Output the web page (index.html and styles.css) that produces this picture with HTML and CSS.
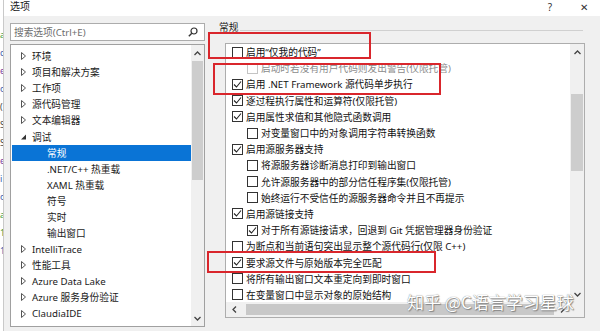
FILE: index.html
```html
<!DOCTYPE html>
<html lang="zh-CN">
<head>
  <meta charset="UTF-8" />
  <title>选项</title>
  <link rel="stylesheet" href="styles.css">
</head>
<body>
  <div class="desk">
    <div class="strip">
      <span class="g">a</span><span class="b">c</span><span class="p">e</span><span class="b">o</span><span>(</span><span>S</span><span>S</span><span class="p">e</span><span class="b">i</span><span class="b">o</span><span class="g">a</span><span class="g">1</span><span class="b">1</span>
    </div>

    <div class="dialog">
      <div class="titlebar">
        <span class="title">选项</span>
        <span class="tb-btn">?</span>
        <span class="tb-btn close">✕</span>
      </div>

      <div class="dialog-body">
        <div class="left">
          <div class="search">
            <span class="search-text">搜索选项(Ctrl+E)</span>
            <svg class="search-icon" width="10" height="10" viewBox="0 0 10 10">
              <circle cx="6" cy="4" r="3" fill="none" stroke="#333" stroke-width="1.2"/>
              <line x1="3.8" y1="6.2" x2="0.8" y2="9.2" stroke="#333" stroke-width="1.4"/>
            </svg>
          </div>

          <div class="tree">
            <div class="tree-list">
              <div class="node"><svg class="arr" width="5" height="8" viewBox="0 0 5 8"><polygon points="0.5,0.5 4.5,4 0.5,7.5" fill="none" stroke="#555"/></svg>环境</div>
              <div class="node"><svg class="arr" width="5" height="8" viewBox="0 0 5 8"><polygon points="0.5,0.5 4.5,4 0.5,7.5" fill="none" stroke="#555"/></svg>项目和解决方案</div>
              <div class="node"><svg class="arr" width="5" height="8" viewBox="0 0 5 8"><polygon points="0.5,0.5 4.5,4 0.5,7.5" fill="none" stroke="#555"/></svg>工作项</div>
              <div class="node"><svg class="arr" width="5" height="8" viewBox="0 0 5 8"><polygon points="0.5,0.5 4.5,4 0.5,7.5" fill="none" stroke="#555"/></svg>源代码管理</div>
              <div class="node"><svg class="arr" width="5" height="8" viewBox="0 0 5 8"><polygon points="0.5,0.5 4.5,4 0.5,7.5" fill="none" stroke="#555"/></svg>文本编辑器</div>
              <div class="node"><svg class="arr" width="5" height="8" viewBox="0 0 5 8"><polygon points="5,1.5 5,6.5 0,6.5" fill="#333"/></svg>调试</div>
              <div class="node sub selected">常规</div>
              <div class="node sub">.NET/C++ 热重载</div>
              <div class="node sub">XAML 热重载</div>
              <div class="node sub">符号</div>
              <div class="node sub">实时</div>
              <div class="node sub">输出窗口</div>
              <div class="node"><svg class="arr" width="5" height="8" viewBox="0 0 5 8"><polygon points="0.5,0.5 4.5,4 0.5,7.5" fill="none" stroke="#555"/></svg>IntelliTrace</div>
              <div class="node"><svg class="arr" width="5" height="8" viewBox="0 0 5 8"><polygon points="0.5,0.5 4.5,4 0.5,7.5" fill="none" stroke="#555"/></svg>性能工具</div>
              <div class="node"><svg class="arr" width="5" height="8" viewBox="0 0 5 8"><polygon points="0.5,0.5 4.5,4 0.5,7.5" fill="none" stroke="#555"/></svg>Azure Data Lake</div>
              <div class="node"><svg class="arr" width="5" height="8" viewBox="0 0 5 8"><polygon points="0.5,0.5 4.5,4 0.5,7.5" fill="none" stroke="#555"/></svg>Azure 服务身份验证</div>
              <div class="node"><svg class="arr" width="5" height="8" viewBox="0 0 5 8"><polygon points="0.5,0.5 4.5,4 0.5,7.5" fill="none" stroke="#555"/></svg>ClaudiaIDE</div>
            </div>
            <div class="vscroll tree-scroll">
              <div class="sb-arrow"><svg width="7" height="5" viewBox="0 0 7 5"><polyline points="0.5,4 3.5,1 6.5,4" fill="none" stroke="#444" stroke-width="1.3"/></svg></div>
              <div class="thumb tree-thumb"></div>
              <div class="track"></div>
              <div class="sb-arrow"><svg width="7" height="5" viewBox="0 0 7 5"><polyline points="0.5,1 3.5,4 6.5,1" fill="none" stroke="#444" stroke-width="1.3"/></svg></div>
            </div>
          </div>
        </div>

        <div class="right">
          <div class="group-head">
            <span class="group-title">常规</span>
            <span class="group-line"></span>
          </div>

          <div class="panel">
            <div class="panel-main">
              <div class="rows">
                <div class="row"><span class="cb"></span>启用“仅我的代码”</div>
                <div class="row sub disabled"><span class="cb"></span>启动时若没有用户代码则发出警告(仅限托管)</div>
                <div class="row"><span class="cb"><svg width="9" height="9" viewBox="0 0 9 9"><polyline points="1,4.5 3.5,7 8,1.5" fill="none" stroke="#222" stroke-width="1.1"/></svg></span>启用 .NET Framework 源代码单步执行</div>
                <div class="row"><span class="cb"><svg width="9" height="9" viewBox="0 0 9 9"><polyline points="1,4.5 3.5,7 8,1.5" fill="none" stroke="#222" stroke-width="1.1"/></svg></span>逐过程执行属性和运算符(仅限托管)</div>
                <div class="row"><span class="cb"><svg width="9" height="9" viewBox="0 0 9 9"><polyline points="1,4.5 3.5,7 8,1.5" fill="none" stroke="#222" stroke-width="1.1"/></svg></span>启用属性求值和其他隐式函数调用</div>
                <div class="row sub"><span class="cb"></span>对变量窗口中的对象调用字符串转换函数</div>
                <div class="row"><span class="cb"><svg width="9" height="9" viewBox="0 0 9 9"><polyline points="1,4.5 3.5,7 8,1.5" fill="none" stroke="#222" stroke-width="1.1"/></svg></span>启用源服务器支持</div>
                <div class="row sub"><span class="cb"></span>将源服务器诊断消息打印到输出窗口</div>
                <div class="row sub"><span class="cb"></span>允许源服务器中的部分信任程序集(仅限托管)</div>
                <div class="row sub"><span class="cb"></span>始终运行不受信任的源服务器命令并且不再提示</div>
                <div class="row"><span class="cb"><svg width="9" height="9" viewBox="0 0 9 9"><polyline points="1,4.5 3.5,7 8,1.5" fill="none" stroke="#222" stroke-width="1.1"/></svg></span>启用源链接支持</div>
                <div class="row sub"><span class="cb"><svg width="9" height="9" viewBox="0 0 9 9"><polyline points="1,4.5 3.5,7 8,1.5" fill="none" stroke="#222" stroke-width="1.1"/></svg></span>对于所有源链接请求，回退到 Git 凭据管理器身份验证</div>
                <div class="row"><span class="cb"></span>为断点和当前语句突出显示整个源代码行(仅限 C++)</div>
                <div class="row"><span class="cb"><svg width="9" height="9" viewBox="0 0 9 9"><polyline points="1,4.5 3.5,7 8,1.5" fill="none" stroke="#222" stroke-width="1.1"/></svg></span>要求源文件与原始版本完全匹配</div>
                <div class="row"><span class="cb"></span>将所有输出窗口文本重定向到即时窗口</div>
                <div class="row"><span class="cb"></span>在变量窗口中显示对象的原始结构</div>
              </div>
              <div class="vscroll panel-scroll">
                <div class="sb-arrow"><svg width="7" height="5" viewBox="0 0 7 5"><polyline points="0.5,4 3.5,1 6.5,4" fill="none" stroke="#444" stroke-width="1.3"/></svg></div>
                <div class="track top-gap"></div>
                <div class="thumb panel-thumb"></div>
                <div class="track"></div>
                <div class="sb-arrow"><svg width="7" height="5" viewBox="0 0 7 5"><polyline points="0.5,1 3.5,4 6.5,1" fill="none" stroke="#444" stroke-width="1.3"/></svg></div>
              </div>
            </div>
            <div class="hscroll">
              <div class="sb-arrow-h"><svg width="5" height="7" viewBox="0 0 5 7"><polyline points="4,0.5 1,3.5 4,6.5" fill="none" stroke="#444" stroke-width="1.3"/></svg></div>
              <div class="hthumb"></div>
              <div class="sb-arrow-h"><svg width="5" height="7" viewBox="0 0 5 7"><polyline points="1,0.5 4,3.5 1,6.5" fill="none" stroke="#444" stroke-width="1.3"/></svg></div>
              <div class="corner"></div>
            </div>
          </div>
        </div>
      </div>
    </div>
  </div>

  <!-- annotation boxes drawn over the screenshot -->
  <div class="mark mark-1"></div>
  <div class="mark mark-2"></div>
  <div class="mark mark-3"></div>

  <div class="watermark">知乎 @C语言学习星球</div>
</body>
</html>
```

FILE: styles.css
```css
html, body {
  margin: 0;
  padding: 0;
}
body {
  width: 600px;
  height: 331px;
  overflow: hidden;
  position: relative;
  background: #f0f0f0;
  font-family: "Noto Sans", "Noto Sans CJK SC", sans-serif;
  font-size: 9.7px;
  color: #1a1a1a;
}

.desk { display: flex; height: 331px; }

.strip {
  width: 3px;
  border-right: 1px solid #c9c9c9;
  background: #fff;
  overflow: hidden;
  display: flex;
  flex-direction: column;
  gap: 9px;
  padding-top: 30px;
  font-size: 9px;
  line-height: 9px;
  color: #444;
}
.strip .g { color: #3a9a3a; }
.strip .b { color: #3a5fb0; }
.strip .p { color: #7a3aa0; }

.dialog { flex: 1; display: flex; flex-direction: column; }

.titlebar {
  height: 16px;
  background: #fff;
  display: flex;
  align-items: flex-start;
}
.title { padding-left: 6px; font-size: 10px; line-height: 12px; flex: 1; }
.tb-btn {
  font-size: 10px;
  line-height: 12px;
  padding-top: 1px;
  color: #333;
  width: 36px;
  text-align: center;
}
.tb-btn.close { width: 32px; }

.dialog-body { display: flex; flex: 1; }

/* left: search + tree */
.left { width: 195px; margin-left: 6px; padding-top: 7px; }

.search {
  height: 18px;
  box-sizing: border-box;
  border: 1px solid #acacac;
  background: #fff;
  display: flex;
  align-items: center;
  padding: 0 6px 0 3px;
}
.search-text { flex: 1; color: #6d6d6d; }
.search-icon { display: block; }

.tree {
  margin-top: 3px;
  height: 283px;
  box-sizing: border-box;
  border: 1px solid #a0a0a0;
  background: #fff;
  display: flex;
}
.tree-list { flex: 1; padding-top: 3px; overflow: hidden; }
.node {
  height: 16.1px;
  display: flex;
  align-items: center;
  padding-left: 10px;
  white-space: nowrap;
}
.node .arr { margin-right: 6px; flex: none; }
.node.sub { padding-left: 36px; }
.node.selected { background: #0a74d6; color: #fff; margin-left: 1px; padding-left: 35px; }

.vscroll {
  width: 13px;
  background: #f0f0f0;
  display: flex;
  flex-direction: column;
}
.sb-arrow {
  height: 16px;
  display: flex;
  align-items: center;
  justify-content: center;
  flex: none;
}
.thumb { background: #cdcdcd; margin: 0 1px; flex: none; }
.track { flex: 1; }
.tree-thumb { height: 119px; }

/* right: settings panel */
.right { flex: 1; display: flex; flex-direction: column; padding-left: 14px; }

.group-head {
  height: 27px;
  box-sizing: border-box;
  padding-top: 6px;
  display: flex;
  align-items: flex-start;
}
.group-title { line-height: 12px; }
.group-line {
  flex: 1;
  border-top: 1px solid #d0d0d0;
  margin: 8px 17px 0 2px;
}

.panel {
  margin-left: 6px;
  width: 360px;
  height: 275px;
  box-sizing: border-box;
  border: 1px solid #adadad;
  background: #fff;
  display: flex;
  flex-direction: column;
}
.panel-main { flex: 1; display: flex; overflow: hidden; }
.rows { flex: 1; overflow: hidden; }
.row {
  height: 16.2px;
  display: flex;
  align-items: center;
  padding-left: 6px;
  white-space: nowrap;
  color: #111;
}
.row.sub { padding-left: 21px; }
.row.disabled { color: #8c8c8c; }
.cb {
  width: 11px;
  height: 11px;
  box-sizing: border-box;
  border: 1px solid #333;
  background: #fff;
  margin-right: 3px;
  flex: none;
  display: flex;
  align-items: center;
  justify-content: center;
}
.row.disabled .cb { border-color: #c4c4c4; }
.cb svg { display: block; }

.panel-scroll { width: 14px; }
.top-gap { flex: none; height: 34px; }
.panel-thumb { height: 77px; }

.hscroll {
  height: 15px;
  background: #f0f0f0;
  display: flex;
  align-items: stretch;
}
.sb-arrow-h {
  width: 16px;
  display: flex;
  align-items: center;
  justify-content: center;
  flex: none;
}
.hthumb { flex: 1; background: #c8c8c8; margin: 2px 0 2px 4px; }
.corner { width: 14px; background: #f0f0f0; }

/* red annotation boxes */
.mark {
  position: absolute;
  border: 2px solid #d9262c;
  box-sizing: border-box;
}
.mark-1 { left: 208px; top: 32px; width: 163px; height: 27px; }
.mark-2 { left: 213px; top: 63px; width: 228px; height: 32px; }
.mark-3 { left: 207px; top: 251px; width: 229px; height: 22px; }

.watermark {
  position: absolute;
  left: 407px;
  top: 292px;
  font-family: "Noto Sans CJK SC", sans-serif;
  font-size: 17px;
  line-height: 20px;
  color: #fff;
  white-space: nowrap;
  text-shadow: 0 0 1px #666, 1px 1px 1px #888;
}
```
